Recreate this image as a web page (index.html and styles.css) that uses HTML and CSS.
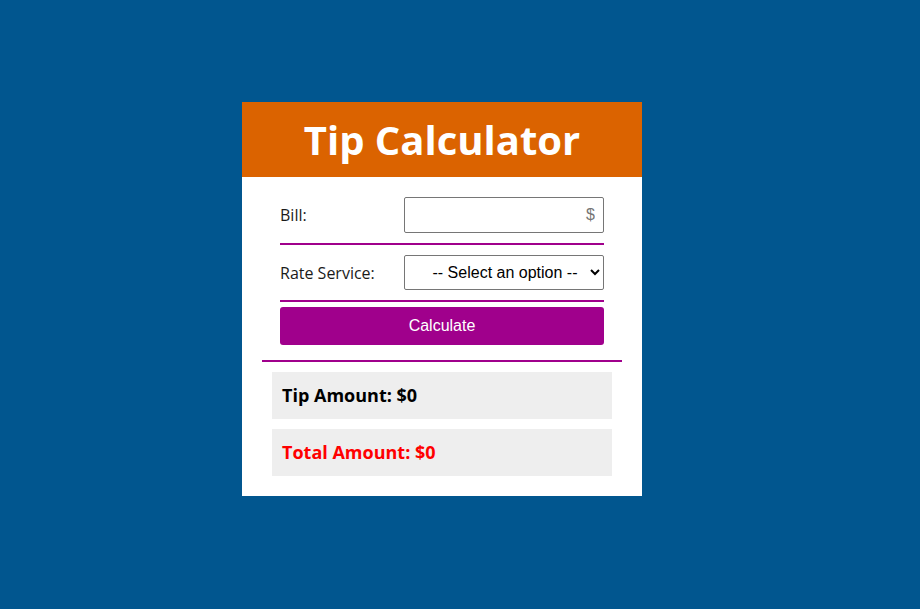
FILE: index.html
```html
<!DOCTYPE html>
<html>
<head>
<meta charset="utf-8">
<link rel="stylesheet" href="styles.css">
</head>
<body>
<div class="card">
  <div class="header"><h1 class="title">Tip Calculator</h1></div>
  <form class="form">
    <div class="row">
      <label class="label" for="bill">Bill:</label>
      <input class="field input" id="bill" type="text" placeholder="$">
    </div>
    <div class="row">
      <label class="label" for="rate">Rate Service:</label>
      <select class="field select" id="rate">
        <option>-- Select an option --</option>
      </select>
    </div>
    <button class="btn" type="button">Calculate</button>
  </form>
  <div class="divider"></div>
  <div class="results">
    <div class="result">Tip Amount: $0</div>
    <div class="result total">Total Amount: $0</div>
  </div>
</div>
</body>
</html>
```
FILE: styles.css
```css
html, body { margin: 0; padding: 0; }
body {
  background: #01568f;
  width: 920px;
  height: 609px;
  overflow: hidden;
  font-family: "Open Sans", "Noto Sans", sans-serif;
}
.card {
  width: 400px;
  margin: 102px 0 0 242px;
  background: #fff;
  padding-bottom: 20px;
}
.header {
  background: #db6300;
  height: 75px;
  display: flex;
  align-items: center;
  justify-content: center;
}
.title {
  margin: 0;
  color: #fff;
  font-size: 40px;
  font-weight: 700;
  line-height: 1;
}
.form {
  padding: 20px 38px 0 38px;
  display: flex;
  flex-direction: column;
}
.row {
  display: flex;
  align-items: center;
  justify-content: space-between;
  padding-bottom: 10px;
  border-bottom: 2px solid #a0008c;
  margin-bottom: 10px;
}
.row + .row { margin-bottom: 5px; }
.label {
  font-size: 16px;
  color: #1a1a1a;
}
.field {
  width: 200px;
  box-sizing: border-box;
  border: 1px solid #767676;
  border-radius: 2px;
  background: #fff;
  font-family: "Liberation Sans", Arial, sans-serif;
  font-size: 16px;
  margin: 0;
}
.input {
  height: 36px;
  padding: 0 8px;
  text-align: right;
}
.input::placeholder { color: #757575; }
.select {
  height: 35px;
  padding: 0 2px 0 16px;
  color: #000;
  text-align: center;
}
.btn {
  height: 38px;
  border: none;
  border-radius: 3px;
  background: #a0008c;
  color: #fff;
  font-family: "Liberation Sans", Arial, sans-serif;
  font-size: 16px;
  padding: 0;
}
.divider {
  height: 2px;
  background: #a0008c;
  margin: 15px 20px 10px 20px;
}
.results {
  padding: 0 30px;
  display: flex;
  flex-direction: column;
  gap: 10px;
}
.result {
  background: #eee;
  height: 47px;
  box-sizing: border-box;
  padding: 0 10px 2px 10px;
  display: flex;
  align-items: center;
  font-size: 18px;
  font-weight: 700;
  color: #000;
}
.total { color: #ff0000; }
```
